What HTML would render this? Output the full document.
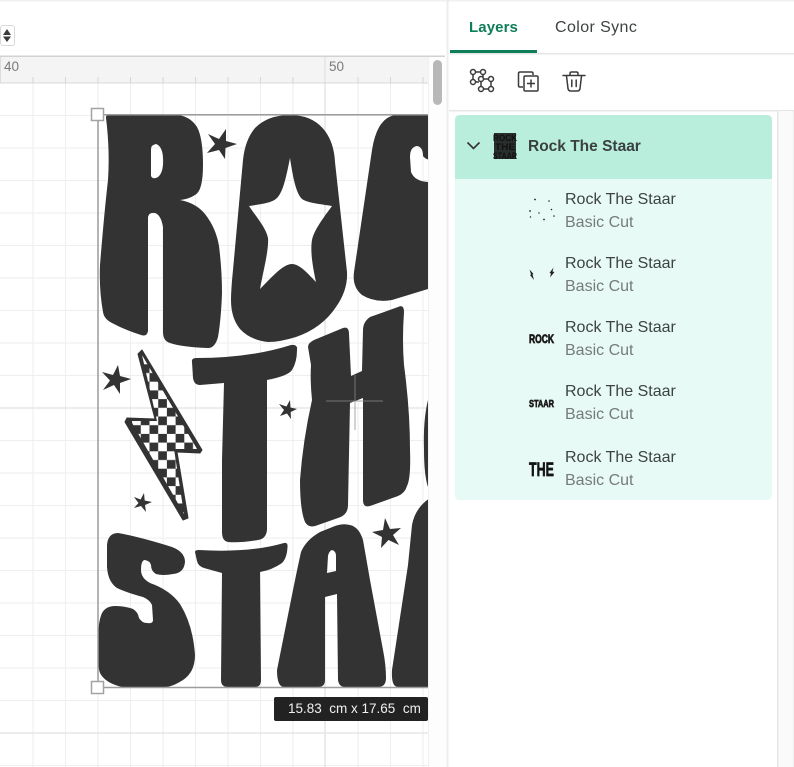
<!DOCTYPE html>
<html lang="en"><head><meta charset="utf-8"><title>Layers</title>
<style>
html,body{margin:0;padding:0;background:#fff}
#p{position:relative;width:794px;height:767px;overflow:hidden;background:#fff;font-family:"Liberation Sans",sans-serif}
#p svg.a{position:absolute;left:0;top:0}
.t{position:absolute;white-space:pre;line-height:20px}
.n{font-size:16px;color:#3d4342}
.s{font-size:16px;color:#757b79}
</style></head><body><div id="p">
<svg class="a" width="794" height="767" viewBox="0 0 794 767" xmlns="http://www.w3.org/2000/svg">
<defs>
<clipPath id="cv"><rect x="0" y="83" width="428" height="684"/></clipPath>
<pattern id="ck" patternUnits="userSpaceOnUse" x="149.5" y="381.7" width="17.4" height="17.4">
<rect width="8.7" height="8.7" fill="#fff"/><rect x="8.7" y="8.7" width="8.7" height="8.7" fill="#fff"/>
</pattern>
</defs>
<rect x="0" y="0" width="794" height="1.5" fill="#f0f0f0"/>
<rect x="0.5" y="25.5" width="14" height="20" rx="2.5" fill="#fff" stroke="#d8d8d8"/>
<path d="M7 29L11 35H3Z M7 42L3 36.500H11Z" fill="#3a3a3a"/>
<!-- canvas -->
<rect x="0" y="56" width="428" height="711" fill="#fff"/>
<rect x="0" y="56" width="428" height="27" fill="#f4f4f4"/>
<g stroke="#eeeeee" stroke-width="1">
<path d="M33 83V767M65.500 83V767M98 83V767M130.500 83V767M163 83V767M195.500 83V767M228 83V767M260.500 83V767M293 83V767M358 83V767M390.500 83V767M423 83V767"/>
<path d="M0 115.500H428M0 148H428M0 180.500H428M0 213H428M0 245.500H428M0 278H428M0 310.500H428M0 343H428M0 375.500H428M0 440.500H428M0 473H428M0 505.500H428M0 538H428M0 570.500H428M0 603H428M0 635.500H428M0 668H428M0 700.500H428M0 765.500H428"/>
</g>
<g stroke="#e2e2e2" stroke-width="1.300">
<path d="M325 56V767M0 408H428M0 733H428"/>
</g>
<path d="M0.500 56V83" stroke="#dcdcdc"/>
<path d="M33 77V83M65.500 77V83M98 77V83M130.500 77V83M163 77V83M195.500 77V83M228 77V83M260.500 77V83M293 77V83M358 77V83M390.500 77V83M423 77V83" stroke="#d6d6d6"/>
<rect x="0" y="82.500" width="428" height="1" fill="#d8d8d8"/>
<rect x="0" y="55.500" width="445" height="1.500" fill="#d2d2d2"/>
<!-- artwork -->
<g clip-path="url(#cv)" fill="#333333" fill-rule="evenodd">
<path d="M106 118Q105.500 115 109 115L177 115Q190 116 197 127Q203 138 203 165Q203 191 195 195Q189 199 180 200Q196 203 205 214Q216 228 219 246Q222 270 222 293Q221 320 218 337Q215 348 208 348Q182 347 170 343Q163 341 163 332L163 227Q161 215 155 213Q149 212 148 217L148 331Q147 337 141 335Q125 330 112 323Q104 319 103 312Q99 290 100 265Q104 215 108 180Q110 150 106 118Z M151 149Q151 145 156 144Q162 146 163 157Q164 172 158 177Q153 180 151 176Z"/>
<path d="M290 115Q313 115 325 131Q334 143 335 162L347 272Q348 290 336 307Q322 328 296 337Q280 342 268 342Q250 340 240 329Q231 318 231 300Q231 290 233 270L243 160Q245 140 255 128Q268 115 290 115Z M290 158C286 178 283 192 277 198C272 203 262 204 249 206C257 218 266 228 268 238C269 250 263 272 260 289C272 277 283 264 292 264C300 264 308 274 316 282C313 268 310 252 312 240C314 230 324 217 332 206C320 204 308 203 302 199C296 193 293 178 290 158Z"/>
<path d="M428 115L395 115Q377 118 372 150L354 272Q352 287 362 295Q375 303 392 300L428 289Z M410 157Q410 147 417 146Q423 147 423 156Q425 159 430 160L430 182Q415 182 411 172Z"/>
<path d="M192 362Q191 358 197 358Q250 358 291 345Q298 344 297 350Q297 362 292 370Q288 376 267 380L267 530Q266 539 258 540Q240 543 228 542Q222 541 222 532L222 460L224 383L200 385Q194 385 193 378Z"/>
<path d="M308 347Q308 343 314 340L343 328Q349 326 349 334L351 376L362 371L363 330Q363 322 370 317L398 307Q404 304 404 312Q402 340 404 365Q410 410 410 450Q411 478 407 486Q405 493 398 496L370 506Q363 508 363 500L363 398L350 403L348 505Q348 515 338 518L318 525Q309 529 305 522Q300 510 300 480Q303 440 312 400Q310 380 311 365Z"/>
<path d="M428 400Q423 420 424 450Q424 475 428 487Z"/>
<path d="M107 545Q108 533 118 533Q140 537 172 547Q185 552 185 562Q184 573 173 574Q163 576 156 574Q151 571 151 565Q150 561 145 560Q141 560 141 570Q141 578 150 583Q170 590 180 604Q193 625 195 655Q195 672 183 680Q172 687 165 687L122 687Q105 683 100 673Q97 665 98 640Q98 622 102 613Q106 606 115 606Q125 606 133 609Q138 612 139 618Q142 623 147 623Q153 624 153 620L152 605Q150 600 143 597Q125 592 117 588Q108 582 107 567Z"/>
<path d="M195 552Q195 550 199 550Q250 553 284 543Q288 542 287.500 547Q287 558 282 563Q272 570 260 572L261 680Q261 687 255 687L228 687Q221 687 221 680L222 573L204 568Q198 566 197 561Z"/>
<path d="M277 670Q277 687 284 687L318 687Q325 687 325 680L325 597L337 594L338 680Q339 687 345 687L378 687Q386 687 386 678Q386 665 383 650L370 580L363 540Q359 527 350 525Q343 523 335 526L320 532Q306 540 301 552Q297 570 292 595Z M327 573L328 556Q329 551 332 550Q336 551 336 556L336 571Z"/>
<path d="M430 498Q415 508 412 525Q410 545 408 565L392 670Q391 687 398 687L430 687Z"/>
<!-- stars -->
<polygon points="208,134 219,139 226,129 226,141 237,144 225.500,148 225,159 219,150 207,153 215,144"/>
<polygon points="118,365 120,376 131,379 120,383 120,394 114,385 103,390 110,380.500 102,372 113,375"/>
<polygon points="290,400 290.500,407.500 297,409 290.700,412 291,419 287,413.500 280,416 284,410 279,404 286.500,406.500"/>
<polygon points="144,493 144.700,500.500 152,502 145,505 146,512 141,506 134,508 138.500,503 134,497 140.600,499.500"/>
<polygon points="385,518 390,529 401,528 393,535 399,545 388.500,540 381,548 382,537 372,532 383,530"/>
<!-- bolt -->
<path d="M142 350L138 354L155 419L127 418L125 422L183 520L188 518L177 452L200 453L202 450Z" stroke="#333" stroke-width="1" stroke-linejoin="round"/>
<path d="M142 355L157 421L131 421L184 514L174 449L197 449Z" fill="url(#ck)"/>
</g>
<!-- crosshair -->
<path d="M326 401H383M355 375V430" stroke="#8a8a8a" stroke-width="1" opacity=".75"/>
<!-- selection -->
<path d="M98 115V687M98 114.800H428M98 687.500H428" stroke="#9c9c9c" stroke-width="1.500" fill="none"/>
<rect x="91.500" y="108.500" width="12" height="12" fill="#fff" stroke="#a3a3a3" stroke-width="1.500"/>
<rect x="91.500" y="681.500" width="12" height="12" fill="#fff" stroke="#a3a3a3" stroke-width="1.500"/>
<rect x="274" y="697" width="154" height="24" rx="2" fill="#222"/>
<!-- scrollbar strip -->
<rect x="428" y="57" width="19" height="710" fill="#fdfdfd"/>
<rect x="428" y="57" width="1" height="710" fill="#f0f0f0"/>
<rect x="433" y="60" width="9" height="45" rx="4.500" fill="#b8b8b8"/>
<rect x="446.500" y="0" width="2" height="767" fill="#ededed"/>
<!-- right panel -->
<rect x="450" y="53" width="344" height="1.500" fill="#e6e6e6"/>
<rect x="450" y="50" width="87" height="3" fill="#0e7d59"/>
<rect x="449" y="110" width="345" height="1.500" fill="#e6e6e6"/>
<rect x="777" y="111" width="17" height="656" fill="#fafafa"/>
<rect x="777" y="111" width="1.500" height="656" fill="#e6e6e6"/>
<rect x="793" y="111" width="1" height="656" fill="#f0f0f0"/>
<g fill="none" stroke="#3a3a3a" stroke-width="1.500">
<path d="M475.500 72H481M473 74.500V79.500M475.500 82H479M483 74.500V77"/>
<path d="M483.500 79H488.500M481 81.500V86.500M483.500 89H488.500M491 81.500V86.500"/>
<circle cx="473" cy="72" r="2.500"/><circle cx="483" cy="72" r="2.500"/><circle cx="473" cy="82" r="2.500"/><circle cx="481" cy="79" r="2.500"/><circle cx="491" cy="79" r="2.500"/><circle cx="481" cy="89" r="2.500"/><circle cx="491" cy="89" r="2.500"/>
<path d="M533 75V73.500Q533 72 531.500 72H520Q518.500 72 518.500 73.500V85.500Q518.500 87 520 87H523"/>
<rect x="524" y="76" width="14" height="15" rx="1.200"/>
<path d="M531 79.500V87.500M527 83.500H535"/>
<path d="M563 75.500H585M570 75V73.500Q570 72 571.500 72H576.500Q578 72 578 73.500V75M566.500 76L568 88.500Q568.300 91 571 91H577Q579.700 91 580 88.500L581.500 76M571.800 80V86.500M576.200 80V86.500" stroke-linecap="round"/>
</g>
<!-- list -->
<path d="M455 179V120Q455 115 460 115H767Q772 115 772 120V179Z" fill="#b9eedd"/>
<path d="M455 179H772V495Q772 500 767 500H460Q455 500 455 495Z" fill="#e8faf5"/>
<path d="M467.500 142.500L473.500 148.500L479.500 142.500" fill="none" stroke="#333" stroke-width="1.600"/>
<!-- thumbs -->
<g font-family="'Liberation Sans',sans-serif" font-weight="700" fill="#111">
<rect x="494" y="133" width="22" height="26" fill="#1a1a1a" opacity=".9"/>
<text x="493" y="141" font-size="9" textLength="24" lengthAdjust="spacingAndGlyphs">ROCK</text>
<text x="495" y="150" font-size="9" textLength="20" lengthAdjust="spacingAndGlyphs">THE</text>
<text x="493" y="159" font-size="9" textLength="24" lengthAdjust="spacingAndGlyphs">STAAR</text>
<text x="529" y="343" font-size="12" textLength="25" lengthAdjust="spacingAndGlyphs" stroke="#222" stroke-width=".8">ROCK</text>
<text x="529" y="407" font-size="10" textLength="25" lengthAdjust="spacingAndGlyphs" stroke="#222" stroke-width=".7">STAAR</text>
<text x="529" y="476" font-size="19" textLength="25" lengthAdjust="spacingAndGlyphs" stroke="#222" stroke-width=".7">THE</text>
</g>
<g fill="#222">
<circle cx="535" cy="199.500" r=".9"/><circle cx="549" cy="201" r=".8"/><circle cx="530" cy="211" r=".9"/><circle cx="539" cy="213" r=".7"/><circle cx="551.500" cy="209.500" r=".8"/><circle cx="530.500" cy="217" r=".7"/><circle cx="544" cy="219.500" r=".9"/><circle cx="554" cy="216" r=".8"/>
<path d="M529.500 269.500L533.500 274L532.500 274.500L534 280L530 275L531 274.500Z"/>
<path d="M553.500 267.500L549.500 273L551 273.500L550 277.500L554.500 272L552.500 271.500Z"/>
</g>
</svg>
<div class="t" style="left:288px;top:699px;font-size:13.500px;color:#f0f0f0">15.83  cm x 17.65  cm</div>
<div class="t" style="left:4px;top:57px;font-size:13.500px;color:#7a7a7a">40</div>
<div class="t" style="left:329px;top:57px;font-size:13.500px;color:#7a7a7a">50</div>
<div class="t" style="left:469px;top:18px;font-size:15px;font-weight:700;color:#0e7d59;letter-spacing:.1px">Layers</div>
<div class="t" style="left:555px;top:18px;font-size:16px;color:#3d4342;letter-spacing:.4px">Color Sync</div>
<div class="t" style="left:528px;top:137px;font-size:15.500px;font-weight:700;color:#3a403f">Rock The Staar</div>
<div class="t n" style="left:565px;top:190px">Rock The Staar</div><div class="t s" style="left:565px;top:213px">Basic Cut</div>
<div class="t n" style="left:565px;top:254px">Rock The Staar</div><div class="t s" style="left:565px;top:277px">Basic Cut</div>
<div class="t n" style="left:565px;top:318px">Rock The Staar</div><div class="t s" style="left:565px;top:341px">Basic Cut</div>
<div class="t n" style="left:565px;top:382px">Rock The Staar</div><div class="t s" style="left:565px;top:405px">Basic Cut</div>
<div class="t n" style="left:565px;top:448px">Rock The Staar</div><div class="t s" style="left:565px;top:471px">Basic Cut</div>
</div></body></html>
